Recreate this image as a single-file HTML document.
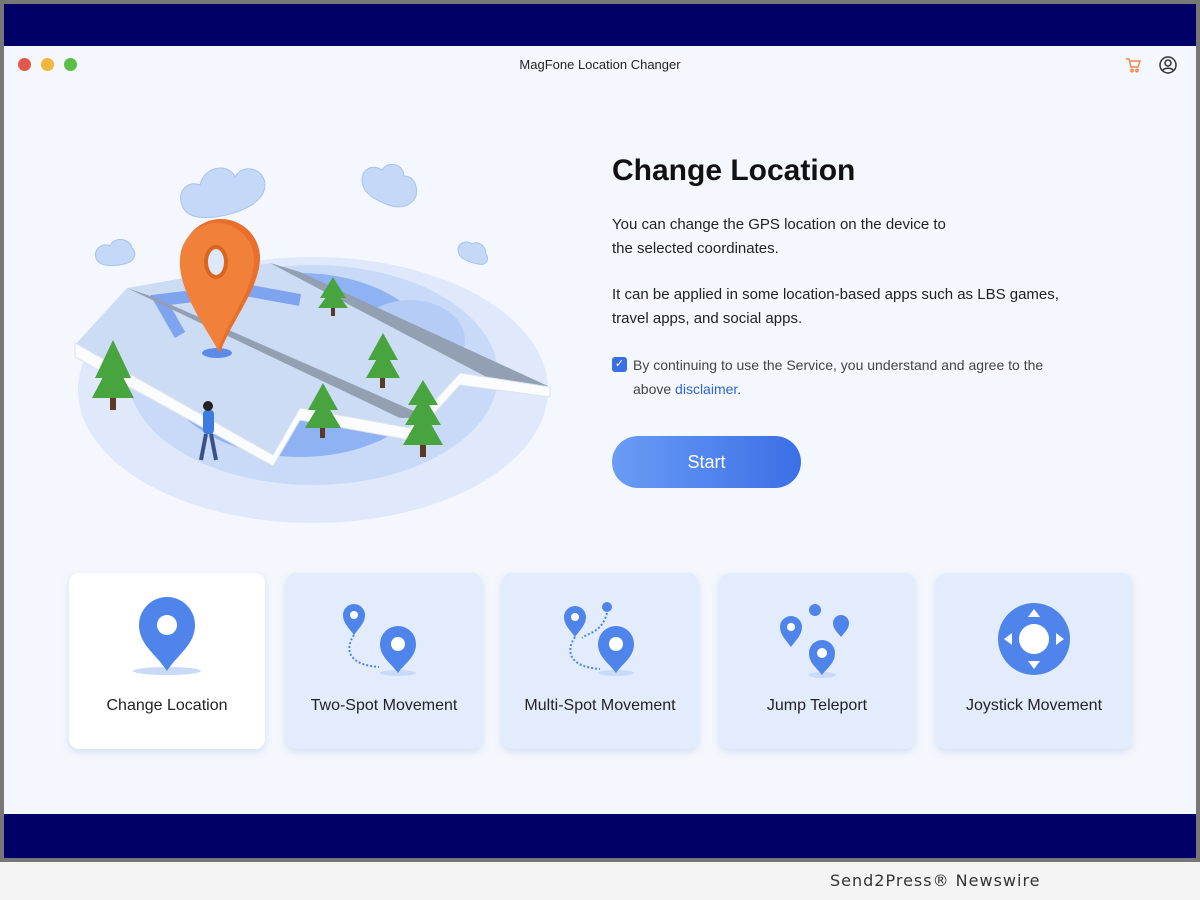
<!DOCTYPE html>
<html><head><style>
body{margin:0;width:1200px;height:900px;background:#f4f4f4;font-family:"Liberation Sans",sans-serif;position:relative;overflow:hidden}
.frame{position:absolute;left:0;top:0;width:1200px;height:862px;background:#777}
.navy1{position:absolute;left:4px;top:4px;width:1192px;height:42px;background:#000066}
.app{position:absolute;left:4px;top:46px;width:1192px;height:768px;background:#f4f7fd}
.navy2{position:absolute;left:4px;top:814px;width:1192px;height:44px;background:#000066}
.dot{position:absolute;top:12px;width:13px;height:13px;border-radius:50%}
.title{position:absolute;top:11px;left:0;width:1192px;text-align:center;font-size:13px;color:#222}
h1{position:absolute;left:608px;top:108px;margin:0;font-size:30px;font-weight:bold;color:#111}
.p{position:absolute;left:608px;font-size:15px;color:#222;line-height:24px}
.btn{position:absolute;left:608px;top:390px;width:189px;height:52px;border-radius:26px;background:linear-gradient(90deg,#6a9cf5,#3b6fe6);color:#fff;font-size:18px;text-align:center;line-height:52px}
.card{position:absolute;top:527px;width:196px;height:176px;border-radius:10px;background:#e3ecfd;box-shadow:0 3px 8px rgba(120,150,220,.25)}
.card span{position:absolute;top:124px;left:0;width:100%;text-align:center;font-size:16px;color:#222}
.card svg{position:absolute;left:48px;top:22px}
</style></head><body>
<div class="frame"></div>
<div class="navy1"></div>
<div class="app">
 <div class="dot" style="left:14px;background:#e5574b"></div>
 <div class="dot" style="left:37px;background:#f2b73a"></div>
 <div class="dot" style="left:60px;background:#5bbf47"></div>
 <div class="title">MagFone Location Changer</div>
 <svg style="position:absolute;left:1120px;top:10px" width="18" height="18" viewBox="0 0 18 18" fill="none" stroke="#f08a4a" stroke-width="1.5"><path d="M2 3h3l2 8h7l2-6H6"/><circle cx="8" cy="14.5" r="1.2"/><circle cx="13" cy="14.5" r="1.2"/></svg>
 <svg style="position:absolute;left:1155px;top:10px" width="18" height="18" viewBox="0 0 18 18" fill="none" stroke="#333" stroke-width="1.5"><circle cx="9" cy="9" r="8"/><circle cx="9" cy="7" r="3"/><path d="M3.5 14.5c2-3 9-3 11 0"/></svg>
 <h1>Change Location</h1>
 <div class="p" style="top:167px">You can change the GPS location on the device to<br>the selected coordinates.</div>
 <div class="p" style="top:237px">It can be applied in some location-based apps such as LBS games,<br>travel apps, and social apps.</div>
 <div style="position:absolute;left:608px;top:311px;width:15px;height:15px;border-radius:3px;background:#3a6fe3;color:#fff;font-size:11px;text-align:center;line-height:15px">✓</div>
 <div class="p" style="top:307px;left:629px;font-size:14px;color:#444">By continuing to use the Service, you understand and agree to the<br>above <span style="color:#2b66d9">disclaimer</span>.</div>
 <div class="btn">Start</div>
 <div class="card" style="left:65px;background:#fff"><svg width="100" height="90" viewBox="0 0 100 90"><ellipse cx="50" cy="76" rx="34" ry="4" fill="#c9daf8"/><path d="M50 76C40 60 22 50 22 30a28 28 0 0 1 56 0c0 20-18 30-28 46z" fill="#4f85ea"/><circle cx="50" cy="30" r="10" fill="#fff"/></svg><span>Change Location</span></div>
 <div class="card" style="left:282px"><svg width="100" height="90" viewBox="0 0 100 90"><path d="M20 40c-10 15-5 30 25 32" stroke="#4f85ea" stroke-dasharray="2 2" fill="none" stroke-width="2"/><path d="M20 40C15 33 9 28 9 20a11 11 0 0 1 22 0c0 8-6 13-11 20z" fill="#4f85ea"/><circle cx="20" cy="20" r="4" fill="#fff"/><ellipse cx="64" cy="78" rx="18" ry="3" fill="#c9daf8"/><path d="M64 78C57 68 46 62 46 49a18 18 0 0 1 36 0c0 13-11 19-18 29z" fill="#4f85ea"/><circle cx="64" cy="49" r="7" fill="#fff"/></svg><span>Two-Spot Movement</span></div>
 <div class="card" style="left:498px"><svg width="100" height="90" viewBox="0 0 100 90"><path d="M25 42c-10 15-5 30 25 32M57 18c-5 20-20 20-25 25" stroke="#4f85ea" stroke-dasharray="2 2" fill="none" stroke-width="2"/><path d="M25 42C20 35 14 30 14 22a11 11 0 0 1 22 0c0 8-6 13-11 20z" fill="#4f85ea"/><circle cx="25" cy="22" r="4" fill="#fff"/><circle cx="57" cy="12" r="5" fill="#4f85ea"/><ellipse cx="66" cy="78" rx="18" ry="3" fill="#c9daf8"/><path d="M66 78C59 68 48 62 48 49a18 18 0 0 1 36 0c0 13-11 19-18 29z" fill="#4f85ea"/><circle cx="66" cy="49" r="7" fill="#fff"/></svg><span>Multi-Spot Movement</span></div>
 <div class="card" style="left:715px"><svg width="100" height="90" viewBox="0 0 100 90"><path d="M24 52C19 45 13 40 13 32a11 11 0 0 1 22 0c0 8-6 13-11 20z" fill="#4f85ea"/><circle cx="24" cy="32" r="4" fill="#fff"/><circle cx="48" cy="15" r="6" fill="#4f85ea"/><path d="M74 42C70 37 66 34 66 28a8 8 0 0 1 16 0c0 6-4 9-8 14z" fill="#4f85ea"/><ellipse cx="55" cy="80" rx="14" ry="3" fill="#c9daf8"/><path d="M55 80C49 72 42 68 42 58a13 13 0 0 1 26 0c0 10-7 14-13 22z" fill="#4f85ea"/><circle cx="55" cy="58" r="5" fill="#fff"/></svg><span>Jump Teleport</span></div>
 <div class="card" style="left:932px"><svg width="100" height="90" viewBox="0 0 100 90"><circle cx="50" cy="44" r="36" fill="#4f85ea"/><circle cx="50" cy="44" r="15" fill="#fff"/><g fill="#fff"><polygon points="50,14 44,22 56,22"/><polygon points="50,74 44,66 56,66"/><polygon points="20,44 28,38 28,50"/><polygon points="80,44 72,38 72,50"/></g></svg><span>Joystick Movement</span></div>
</div>
<svg style="position:absolute;left:0;top:0" width="600" height="560" viewBox="0 0 600 560">
 <ellipse cx="313" cy="390" rx="235" ry="133" fill="#dfe9fb"/>
 <ellipse cx="313" cy="375" rx="185" ry="110" fill="#c8daf8"/>
 <ellipse cx="300" cy="365" rx="140" ry="92" fill="#8fb2f2"/>
 <ellipse cx="410" cy="340" rx="55" ry="40" fill="#b5cdf6"/>
 <polygon points="75,345 127,288 270,263 550,387 460,373 410,430 300,410 273,457 75,350" fill="#cddcf5"/>
 <path d="M180 335 L160 300 L245 290 L300 300" stroke="#7fa4ef" stroke-width="12" fill="none"/>
 <polygon points="127,288 153,297 430,418 400,418" fill="#939fb2"/>
 <polygon points="270,263 300,272 550,387 515,392" fill="#939fb2"/>
 <polygon points="75,343 75,357 273,466 300,420 410,440 460,385 550,397 550,387 460,373 410,428 300,408 273,455" fill="#fbfcfe" stroke="#dde3ec"/>
 <ellipse cx="217" cy="353" rx="15" ry="5" fill="#5b8be8"/>
 <path d="M220 353C208 330 180 290 182 258a38 38 0 0 1 78 0c0 30-30 65-40 95z" fill="#e8702c"/>
 <path d="M218 350C206 328 178 290 180 260a37 37 0 0 1 74 0c0 30-26 60-36 90z" fill="#f0803a"/>
 <ellipse cx="216" cy="262" rx="10" ry="15" fill="#dde8fb" stroke="#d86620" stroke-width="4"/>
 <g fill="#47a43f">
  <polygon points="113,340 95,378 131,378"/><polygon points="113,358 92,398 134,398"/>
  <polygon points="333,277 320,298 346,298"/><polygon points="333,288 318,308 348,308"/>
  <polygon points="383,333 368,360 398,360"/><polygon points="383,348 366,378 400,378"/>
  <polygon points="323,383 308,410 338,410"/><polygon points="323,398 305,428 341,428"/>
  <polygon points="423,380 408,405 438,405"/><polygon points="423,395 405,425 441,425"/><polygon points="423,410 403,445 443,445"/>
 </g>
 <g fill="#5a3a24"><rect x="110" y="398" width="6" height="12"/><rect x="331" y="308" width="4" height="8"/><rect x="380" y="378" width="5" height="10"/><rect x="320" y="428" width="5" height="10"/><rect x="420" y="445" width="6" height="12"/></g>
 <rect x="203" y="410" width="11" height="24" rx="4" fill="#3e7be0"/><circle cx="208" cy="406" r="5" fill="#222"/><path d="M206 434l-5 26M211 434l5 26" stroke="#3a5285" stroke-width="4"/>
 <g fill="#c4d8f7" stroke="#a9c3ee"><path d="M182 205c-6-15 8-25 18-20c4-20 30-22 35-8c8-15 30-8 30 8c0 15-20 28-50 32c-20 2-30-2-33-12z"/><path d="M362 180c0-12 12-16 20-10c6-10 22-6 22 6c10 0 14 10 12 20c-4 10-16 14-30 8c-16-6-24-14-24-24z"/><path d="M96 258c-3-10 8-16 14-12c4-10 20-8 22 2c6 6 2 14-8 16c-12 3-26 2-28-6z"/><path d="M458 250c0-8 10-10 14-6c6-4 14 2 14 10c4 6 0 12-8 10c-10-2-20-6-20-14z"/></g>
</svg>
<div class="navy2"></div>
<div style="position:absolute;left:830px;top:871px;font-family:'DejaVu Sans',sans-serif;font-size:16px;color:#333;letter-spacing:1px">Send2Press® Newswire</div>
</body></html>
